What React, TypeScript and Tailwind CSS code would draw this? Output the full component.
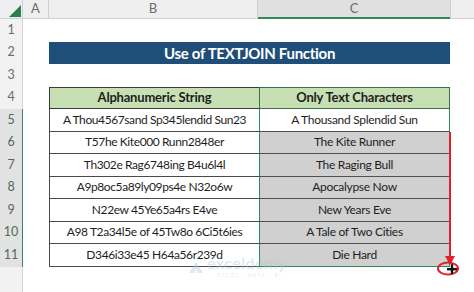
import React from "react"

const data = [
  ["A Thou4567sand Sp345lendid Sun23", "A Thousand Splendid Sun"],
  ["T57he Kite000 Runn2848er", "The Kite Runner"],
  ["Th302e Rag6748ing B4u6l4l", "The Raging Bull"],
  ["A9p8oc5a89ly09ps4e N32o6w", "Apocalypse Now"],
  ["N22ew 45Ye65a4rs E4ve", "New Years Eve"],
  ["A98 T2a34l5e of 45Tw8o 6Ci5t6ies", "A Tale of Two Cities"],
  ["D346i33e45 H64a56r239d", "Die Hard"],
]

const RowHead = ({ n, sel }: { n?: number; sel?: boolean }) => (
  <div
    className={`w-[23px] shrink-0 flex items-center justify-center text-[12.5px] border-r ${
      sel ? "bg-[#e2e2e2] text-[#4f6b55] border-[#2f8a57]" : "bg-[#f2f2f2] text-[#6b6b6b] border-[#d6d6d6]"
    }`}
  >
    {n}
  </div>
)

const App = () => {
  return (
    <div className="relative w-[474px] h-[292px] overflow-hidden bg-white font-['Lato',sans-serif] text-[#1e1e1e] whitespace-nowrap">
      {/* column headers */}
      <div className="flex h-[19px] bg-[#efefef] text-[13px] text-[#6b6b6b]">
        <div className="w-[23px] shrink-0 relative border-r border-b border-[#d0d0d0]">
          <svg width="12" height="12" viewBox="0 0 12 12" className="absolute left-[9px] top-[5px]">
            <polygon points="12,0 12,12 0,12" fill="#2e7d4f" />
          </svg>
        </div>
        <div className="w-[26px] shrink-0 flex items-center justify-center border-r border-b border-[#d0d0d0]">A</div>
        <div className="w-[209px] shrink-0 flex items-center justify-center border-r border-b border-[#d0d0d0]">B</div>
        <div className="w-[192px] shrink-0 flex items-center justify-center bg-[#e0e0e0] border-b-2 border-[#2f8a57]">C</div>
        <div className="flex-1 border-l border-b border-[#d0d0d0]"></div>
      </div>

      {/* row 1 */}
      <div className="flex h-[22.5px]">
        <RowHead n={1} />
      </div>
      {/* row 2 title */}
      <div className="flex h-[22.5px]">
        <RowHead n={2} />
        <div className="w-[26px] shrink-0" />
        <div className="w-[401px] shrink-0 bg-[#1f4e79] text-white font-bold text-[15px] tracking-[-0.3px] flex items-center justify-center">
          Use of TEXTJOIN Function
        </div>
      </div>
      {/* row 3 */}
      <div className="flex h-[22.5px]">
        <RowHead n={3} />
      </div>
      {/* row 4 header */}
      <div className="flex h-[22.5px]">
        <RowHead n={4} />
        <div className="w-[26px] shrink-0" />
        <div className="w-[210px] shrink-0 bg-[#c6e0b4] border border-r-0 border-[#3a3a3a] font-bold text-[13px] tracking-[-0.2px] flex items-center justify-center">
          Alphanumeric String
        </div>
        <div className="w-[191px] shrink-0 bg-[#c6e0b4] border border-[#3f6f4a] font-bold text-[13px] tracking-[-0.2px] flex items-center justify-center">
          Only Text Characters
        </div>
      </div>
      {/* data rows */}
      {data.map(([a, b], i) => (
        <div key={i} className="flex h-[22.5px]">
          <RowHead n={i + 5} sel />
          <div className="w-[26px] shrink-0" />
          <div className="w-[210px] shrink-0 border-l border-b border-[#4a4a4a] text-[12px] tracking-[-0.4px] flex items-center justify-center">
            {a}
          </div>
          <div
            className={`w-[191px] shrink-0 border-l border-r border-[#2f8a57] text-[12px] tracking-[-0.3px] flex items-center justify-center ${
              i === 0 ? "bg-white" : "bg-[#d0d0d0]"
            } ${i === 6 ? "border-b border-b-[#2f8a57]" : "border-b border-b-[#505050]"}`}
          >
            {b}
          </div>
        </div>
      ))}
      {/* remaining */}
      <div className="flex h-[30px]">
        <RowHead />
      </div>

      {/* watermark */}
      <div className="absolute left-[188px] top-[255px] flex items-center gap-[3px] opacity-40 pointer-events-none">
        <svg width="16" height="14" viewBox="0 0 16 14">
          <path d="M1 13 L8 2 L15 13 Z" fill="#b9c8dc" />
          <path d="M5 13 L8 8 L11 13 Z" fill="#dfe7f1" />
        </svg>
        <div className="flex flex-col leading-none gap-[2px]">
          <span className="text-[16px] leading-[16px] text-[#b4c3d8] font-semibold tracking-[0.5px]">exceldemy</span>
          <span className="text-[5px] leading-[5px] text-[#c4cfdd] tracking-[1.5px] ml-[10px]">EXCEL · DATA · BI</span>
        </div>
      </div>

      {/* fill-drag annotation */}
      <svg width="474" height="292" className="absolute left-0 top-0 pointer-events-none">
        <line x1="450" y1="132" x2="450" y2="258" stroke="#e0202a" strokeWidth="2" />
        <polygon points="445,256 455,256 450,265" fill="#e0202a" />
        <ellipse cx="448" cy="268.5" rx="10" ry="6" fill="none" stroke="#e0202a" strokeWidth="2" />
        <rect x="447" y="268" width="10" height="2.4" fill="#111" />
        <rect x="450.8" y="264.2" width="2.4" height="10" fill="#111" />
      </svg>
    </div>
  )
}

export default App
